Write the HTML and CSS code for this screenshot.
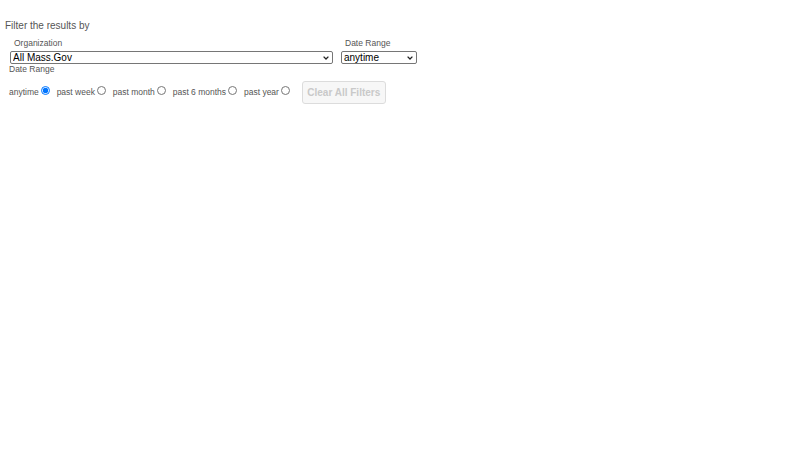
FILE: index.html
```html
<!DOCTYPE html>
<html lang="en">
<head>
<meta charset="utf-8">
<title>Filter</title>
<link rel="stylesheet" href="styles.css">
</head>
<body>
<form class="filters">
  <div class="title">Filter the results by</div>
  <div class="selects">
    <div class="field field-org">
      <label class="label" for="org">Organization</label>
      <select id="org" class="select select-org">
        <option>All Mass.Gov</option>
      </select>
    </div>
    <div class="field field-date">
      <label class="label" for="date">Date Range</label>
      <select id="date" class="select select-date">
        <option>anytime</option>
      </select>
    </div>
  </div>
  <fieldset class="range">
    <legend class="legend">Date Range</legend>
    <div class="radios">
      <label class="opt">anytime <input type="radio" name="r" checked></label>
      <label class="opt">past week <input type="radio" name="r"></label>
      <label class="opt">past month <input type="radio" name="r"></label>
      <label class="opt">past 6 months <input type="radio" name="r"></label>
      <label class="opt">past year <input type="radio" name="r"></label>
      <button type="button" class="clear" disabled>Clear All Filters</button>
    </div>
  </fieldset>
</form>
</body>
</html>
```
FILE: styles.css
```css
html, body {
  margin: 0;
  padding: 0;
  background: #fff;
}
body {
  font-family: "Liberation Sans", Arial, sans-serif;
  color: #555;
}
.filters {
  padding: 20px 5px 0 5px;
}
.title {
  font-size: 10px;
  line-height: 12px;
  color: #555;
}
.selects {
  display: flex;
  gap: 8px;
  margin-top: 6px;
  padding-left: 5px;
}
.field {
  display: flex;
  flex-direction: column;
}
.label {
  font-size: 8.5px;
  line-height: 11px;
  padding-left: 4px;
  margin-bottom: 2px;
  color: #555;
}
.select {
  -webkit-appearance: none;
  appearance: none;
  font-family: "Liberation Sans", Arial, sans-serif;
  font-size: 10px;
  line-height: 11px;
  height: 13px;
  padding: 0 0 0 2px;
  margin: 0;
  color: #000;
  background-color: #fff;
  background-image: url("data:image/svg+xml,%3Csvg xmlns='http://www.w3.org/2000/svg' width='6' height='4' viewBox='0 0 6 4'%3E%3Cpath d='M0.6 0.6 L3 3 L5.4 0.6' fill='none' stroke='%23222' stroke-width='1.3'/%3E%3C/svg%3E");
  background-repeat: no-repeat;
  background-position: right 3px center;
  background-size: 6px 4px;
  border: 1px solid #767676;
  border-radius: 2px;
  box-sizing: border-box;
}
.select-org { width: 323px; }
.select-date { width: 76px; }
.range {
  border: 0;
  margin: 0;
  padding: 0 0 0 4px;
}
.legend {
  padding: 0;
  font-size: 8.5px;
  line-height: 10px;
  color: #555;
}
.radios {
  display: flex;
  align-items: center;
  margin-top: 7px;
  font-size: 8.5px;
  color: #555;
}
.opt {
  display: flex;
  align-items: center;
  margin-right: 6.5px;
  margin-bottom: 2px;
  white-space: pre;
}
.opt input {
  width: 9px;
  height: 9px;
  margin: 0 0 3px 0;
}
.clear {
  margin-left: 5px;
  width: 84px;
  height: 23px;
  padding: 0;
  font-family: "Liberation Sans", Arial, sans-serif;
  font-size: 10px;
  font-weight: bold;
  color: #c9c9c9;
  background: #f7f7f7;
  border: 1px solid #dcdcdc;
  border-radius: 3px;
}
```
